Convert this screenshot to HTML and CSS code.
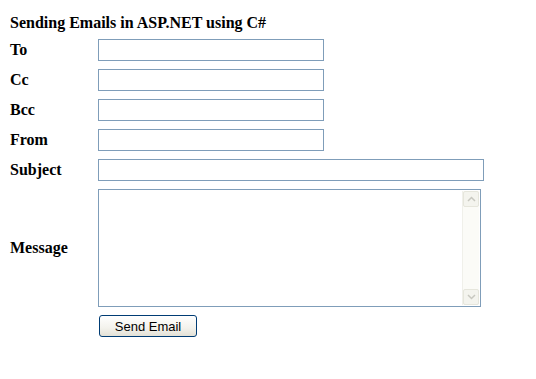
FILE: index.html
```html
<!DOCTYPE html>
<html>
<head>
<meta charset="utf-8">
<link rel="stylesheet" href="styles.css">
</head>
<body>
<div class="page">
  <h1 class="title">Sending Emails in ASP.NET using C#</h1>
  <form class="form">
    <label class="lbl">To</label>
    <input class="field short" type="text">
    <label class="lbl">Cc</label>
    <input class="field short" type="text">
    <label class="lbl">Bcc</label>
    <input class="field short" type="text">
    <label class="lbl">From</label>
    <input class="field short" type="text">
    <label class="lbl">Subject</label>
    <input class="field long" type="text">
    <label class="lbl">Message</label>
    <div class="msgbox">
      <textarea class="msg"></textarea>
      <div class="sbar">
        <div class="sbtn"><svg width="9" height="6" viewBox="0 0 9 6"><path d="M1 5 L4.5 1.5 L8 5" fill="none" stroke="#c8c8c0" stroke-width="1.5"/></svg></div>
        <div class="strack"></div>
        <div class="sbtn"><svg width="9" height="6" viewBox="0 0 9 6"><path d="M1 1 L4.5 4.5 L8 1" fill="none" stroke="#c8c8c0" stroke-width="1.5"/></svg></div>
      </div>
    </div>
    <span></span>
    <div class="actions"><button type="button" class="btn">Send Email</button></div>
  </form>
</div>
</body>
</html>
```
FILE: styles.css
```css
html, body {
  margin: 0;
  padding: 0;
  background: #ffffff;
}
.page {
  padding: 13px 0 0 10px;
  font-family: "Liberation Serif", "Times New Roman", serif;
  color: #000;
}
.title {
  margin: 0;
  font-size: 16px;
  line-height: 20px;
  font-weight: bold;
}
.form {
  margin-top: 6px;
  display: grid;
  grid-template-columns: 88px auto;
  row-gap: 8px;
  justify-items: start;
}
.lbl {
  align-self: center;
  font-size: 16px;
  font-weight: bold;
  line-height: 20px;
}
.field {
  box-sizing: border-box;
  height: 22px;
  border: 1px solid #7f9db9;
  margin: 0;
  padding: 0 3px;
  background: #fff;
  outline: none;
}
.short { width: 226px; }
.long { width: 386px; }
.msgbox {
  box-sizing: border-box;
  width: 383px;
  height: 118px;
  border: 1px solid #7f9db9;
  display: flex;
  background: #fff;
}
.msg {
  flex: 1;
  border: none;
  margin: 0;
  padding: 2px;
  resize: none;
  outline: none;
  overflow: hidden;
}
.sbar {
  width: 16px;
  margin: 1px 1px 1px 0;
  display: flex;
  flex-direction: column;
  background: #fbfbf7;
  border-left: 1px solid #f0f0ea;
}
.sbtn {
  box-sizing: border-box;
  height: 16px;
  border: 1px solid #e6e6dc;
  border-radius: 2px;
  background: #f4f4ee;
  display: flex;
  align-items: center;
  justify-content: center;
}
.strack { flex: 1; }
.actions {
  margin-top: 0;
}
.btn {
  box-sizing: border-box;
  width: 98px;
  height: 22px;
  margin: 0 0 0 1px;
  border: 1px solid #003c74;
  border-radius: 3px;
  background: linear-gradient(#ffffff, #f3f2ec 60%, #e3e1d6);
  font-family: "Liberation Sans", Arial, sans-serif;
  font-size: 13px;
  color: #000;
  padding: 0;
}
```
